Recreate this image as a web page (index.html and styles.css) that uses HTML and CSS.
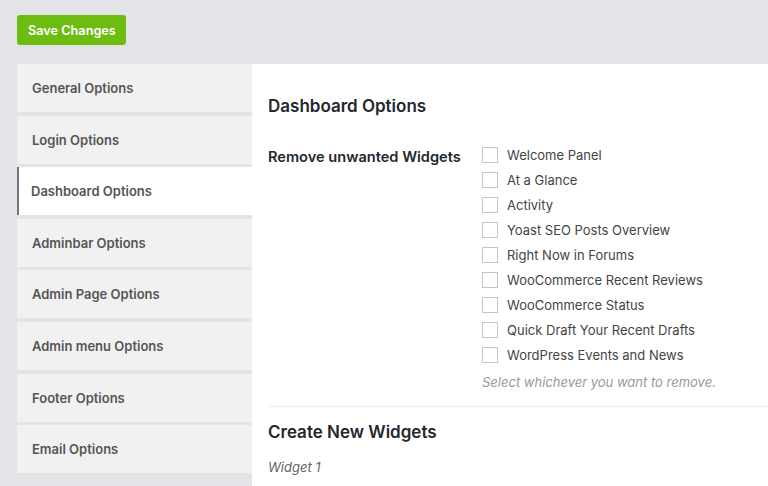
FILE: index.html
```html
<!DOCTYPE html>
<html lang="en">
<head>
    <meta charset="UTF-8">
    <meta name="viewport" content="width=device-width, initial-scale=1.0">
    <title>Dashboard Options</title>
    <link rel="stylesheet" href="styles.css">
</head>
<body>
    <div class="top-bar">
        <button type="button" class="save-btn">Save Changes</button>
    </div>

    <div class="settings">
        <ul class="tabs">
            <li class="tab">General Options</li>
            <li class="tab">Login Options</li>
            <li class="tab active">Dashboard Options</li>
            <li class="tab">Adminbar Options</li>
            <li class="tab">Admin Page Options</li>
            <li class="tab">Admin menu Options</li>
            <li class="tab">Footer Options</li>
            <li class="tab">Email Options</li>
        </ul>

        <div class="panel">
            <h2 class="panel-title">Dashboard Options</h2>

            <div class="field-row">
                <div class="field-label">Remove unwanted Widgets</div>
                <div class="field-body">
                    <label class="check"><input type="checkbox"> Welcome Panel</label>
                    <label class="check"><input type="checkbox"> At a Glance</label>
                    <label class="check"><input type="checkbox"> Activity</label>
                    <label class="check"><input type="checkbox"> Yoast SEO Posts Overview</label>
                    <label class="check"><input type="checkbox"> Right Now in Forums</label>
                    <label class="check"><input type="checkbox"> WooCommerce Recent Reviews</label>
                    <label class="check"><input type="checkbox"> WooCommerce Status</label>
                    <label class="check"><input type="checkbox"> Quick Draft Your Recent Drafts</label>
                    <label class="check"><input type="checkbox"> WordPress Events and News</label>
                    <p class="description">Select whichever you want to remove.</p>
                </div>
            </div>

            <h2 class="section-title">Create New Widgets</h2>
            <p class="widget-name">Widget 1</p>
        </div>
    </div>
</body>
</html>
```

FILE: styles.css
```css
* { margin: 0; padding: 0; box-sizing: border-box; }

body {
    font-family: Inter, "Open Sans", sans-serif;
    background: #e2e4e8;
    color: #23282d;
    height: 486px;
    overflow: hidden;
}

.top-bar {
    padding: 15px 17px 19px;
}

.save-btn {
    height: 30px;
    padding: 0 10px 0 11px;
    background: #6dbd10;
    color: #fff;
    border: none;
    border-radius: 3px;
    font-family: inherit;
    font-size: 12.7px;
    font-weight: 600;
    cursor: pointer;
}

.settings {
    display: flex;
    margin-left: 17px;
}

.tabs {
    list-style: none;
    width: 235px;
    flex-shrink: 0;
    display: flex;
    flex-direction: column;
    gap: 3.6px;
}

.tab {
    height: 48px;
    display: flex;
    align-items: center;
    padding-left: 15px;
    background: #f1f1f1;
    color: #555;
    font-size: 13px;
    font-weight: 600;
}

.tab.active {
    background: #fff;
    border-left: 2px solid #72777c;
    padding-left: 12px;
}

.panel {
    flex: 1;
    background: #fff;
    padding: 32px 0 0 16px;
    min-height: 430px;
}

.panel-title {
    font-size: 17px;
    font-weight: 600;
    color: #23282d;
    margin-bottom: 27px;
}

.field-row {
    display: flex;
    padding-bottom: 16px;
    border-bottom: 1px solid #ececec;
}

.field-label {
    width: 214px;
    font-size: 14.6px;
    font-weight: 600;
    padding-top: 5px;
}

.field-body {
    display: flex;
    flex-direction: column;
}

.check {
    display: flex;
    align-items: center;
    height: 24.9px;
    font-size: 13px;
    color: #444;
}

.check input {
    appearance: none;
    width: 16px;
    height: 16px;
    border: 1px solid #c4c7ca;
    background: #fff;
    margin-right: 9px;
}

.description {
    margin-top: 7px;
    font-size: 13px;
    font-style: italic;
    color: #999;
}

.section-title {
    font-size: 17px;
    font-weight: 600;
    margin-top: 15px;
}

.widget-name {
    margin-top: 17px;
    font-size: 13px;
    font-style: italic;
    color: #666;
}
```
